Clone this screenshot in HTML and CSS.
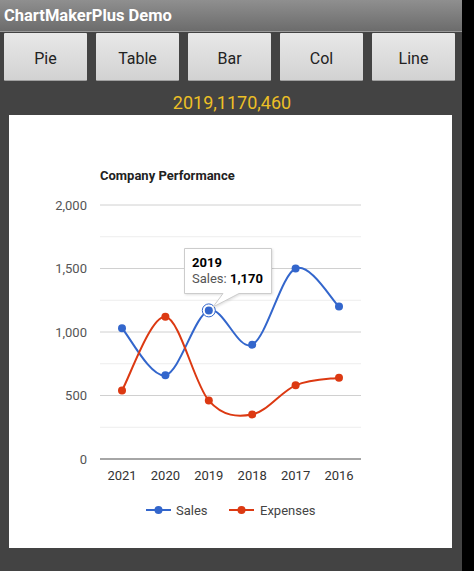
FILE: index.html
```html
<!DOCTYPE html>
<html>
<head>
<meta charset="utf-8">
<link rel="stylesheet" href="styles.css">
</head>
<body>
<div class="app">
  <div class="titlebar">ChartMakerPlus Demo</div>
  <div class="buttons">
    <div class="btn">Pie</div>
    <div class="btn">Table</div>
    <div class="btn">Bar</div>
    <div class="btn">Col</div>
    <div class="btn">Line</div>
  </div>
  <div class="value">2019,1170,460</div>
  <div class="panel">
    <svg class="chart" width="443" height="433" viewBox="0 0 443 433">
      <text class="ctitle" x="91" y="65">Company Performance</text>
      <g class="minor">
        <line x1="91" x2="352" y1="121.75" y2="121.75"/>
        <line x1="91" x2="352" y1="185.25" y2="185.25"/>
        <line x1="91" x2="352" y1="248.75" y2="248.75"/>
        <line x1="91" x2="352" y1="312.25" y2="312.25"/>
      </g>
      <g class="major">
        <line x1="91" x2="352" y1="90" y2="90"/>
        <line x1="91" x2="352" y1="153.5" y2="153.5"/>
        <line x1="91" x2="352" y1="217" y2="217"/>
        <line x1="91" x2="352" y1="280.5" y2="280.5"/>
      </g>
      <line class="base" x1="91" x2="352" y1="344" y2="344"/>
      <g class="ylab">
        <text x="78" y="94.5">2,000</text>
        <text x="78" y="158">1,500</text>
        <text x="78" y="221.5">1,000</text>
        <text x="78" y="285">500</text>
        <text x="78" y="348.5">0</text>
      </g>
      <g class="xlab">
        <text x="113" y="365">2021</text>
        <text x="156.4" y="365">2020</text>
        <text x="199.8" y="365">2019</text>
        <text x="243.2" y="365">2018</text>
        <text x="286.6" y="365">2017</text>
        <text x="330" y="365">2016</text>
      </g>
      <path class="sales" d="M113,213.2 C120.23,221.03 141.93,263.17 156.4,260.2 C170.87,257.23 185.33,200.48 199.8,195.4 C214.27,190.32 228.73,236.68 243.2,229.7 C257.67,222.72 272.13,159.85 286.6,153.5 C301.07,147.15 322.77,185.25 330,191.6"/>
      <path class="exp" d="M113,275.4 C120.23,263.13 141.93,200.1 156.4,201.8 C170.87,203.5 185.33,269.32 199.8,285.6 C214.27,301.88 228.73,302.05 243.2,299.5 C257.67,296.95 272.13,276.43 286.6,270.3 C301.07,264.17 322.77,263.97 330,262.7"/>
      <g class="sdot">
        <circle cx="113" cy="213.2" r="4"/>
        <circle cx="156.4" cy="260.2" r="4"/>
        <circle cx="243.2" cy="229.7" r="4"/>
        <circle cx="286.6" cy="153.5" r="4"/>
        <circle cx="330" cy="191.6" r="4"/>
      </g>
      <g class="edot">
        <circle cx="113" cy="275.4" r="4"/>
        <circle cx="156.4" cy="201.8" r="4"/>
        <circle cx="199.8" cy="285.6" r="4"/>
        <circle cx="243.2" cy="299.5" r="4"/>
        <circle cx="286.6" cy="270.3" r="4"/>
        <circle cx="330" cy="262.7" r="4"/>
      </g>
      <circle class="ring" cx="199.8" cy="195.4" r="6.5"/>
      <circle class="sdot-solid" cx="199.8" cy="195.4" r="4"/>
      <g class="tip">
        <path class="tipbox" d="M175.5,133.5 H262.5 V178.5 H230 L204,192 L214,178.5 H175.5 Z"/>
        <text class="tip1" x="183" y="151.5">2019</text>
        <text class="tip2" x="183" y="168"><tspan class="tlabel">Sales: </tspan><tspan class="tval">1,170</tspan></text>
      </g>
      <g class="legend">
        <line class="sales" x1="137" x2="162" y1="395" y2="395"/>
        <circle class="sdot-solid" cx="149.5" cy="395" r="4"/>
        <text x="167" y="399.5">Sales</text>
        <line class="exp" x1="220" x2="245" y1="395" y2="395"/>
        <circle class="edot-solid" cx="232.5" cy="395" r="4"/>
        <text x="251" y="399.5">Expenses</text>
      </g>
    </svg>
  </div>
</div>
</body>
</html>
```

FILE: styles.css
```css
html, body {
  margin: 0;
  padding: 0;
  background: #000;
}
body {
  width: 474px;
  height: 571px;
  overflow: hidden;
  font-family: Roboto, "Liberation Sans", sans-serif;
}
.app {
  width: 462px;
  height: 571px;
  background: #434343;
  display: flex;
  flex-direction: column;
}
.titlebar {
  height: 32px;
  box-sizing: border-box;
  padding-left: 4px;
  padding-top: 5px;
  line-height: 22px;
  font-size: 16.5px;
  font-weight: bold;
  color: #fff;
  background: linear-gradient(#8f8f8f, #6c6c6c);
  border-bottom: 1px solid #9a9a9a;
}
.buttons {
  display: flex;
  gap: 9px;
  padding: 1px 4px 0 4px;
  height: 49px;
  box-sizing: border-box;
}
.btn {
  width: 83px;
  height: 48px;
  box-sizing: border-box;
  padding-top: 3px;
  background: linear-gradient(#e8e8e8, #d2d2d2);
  border-bottom: 1px solid #a0a0a0;
  border-radius: 1px;
  display: flex;
  align-items: center;
  justify-content: center;
  font-size: 16px;
  color: #222;
}
.value {
  height: 34px;
  box-sizing: border-box;
  padding-top: 10px;
  padding-left: 2px;
  line-height: 24px;
  text-align: center;
  font-size: 18px;
  color: #ecbf26;
}
.panel {
  margin-left: 9px;
  width: 443px;
  height: 433px;
  background: #fff;
}
.chart {
  display: block;
  font-family: Roboto, "Liberation Sans", sans-serif;
}
.ctitle {
  font-size: 13px;
  font-weight: bold;
  fill: #222;
}
.minor line {
  stroke: #ededed;
  stroke-width: 1;
}
.major line {
  stroke: #d0d0d0;
  stroke-width: 1;
}
.base {
  stroke: #888;
  stroke-width: 1.5;
}
.ylab text {
  font-size: 13px;
  fill: #555;
  text-anchor: end;
}
.xlab text {
  font-size: 13px;
  fill: #333;
  text-anchor: middle;
}
.sales {
  fill: none;
  stroke: #3366cc;
  stroke-width: 2;
}
.exp {
  fill: none;
  stroke: #dc3912;
  stroke-width: 2;
}
.sdot circle, .sdot-solid {
  fill: #3366cc;
}
.edot circle, .edot-solid {
  fill: #dc3912;
}
.ring {
  fill: #fff;
  stroke: #3366cc;
  stroke-width: 1;
}
.tipbox {
  fill: #fff;
  stroke: #cccccc;
  stroke-width: 1;
  filter: drop-shadow(1px 1px 1px rgba(0,0,0,0.12));
}
.tip1 {
  font-size: 13px;
  font-weight: bold;
  fill: #000;
}
.tip2 {
  font-size: 13px;
}
.tlabel {
  fill: #555;
}
.tval {
  font-weight: bold;
  fill: #000;
}
.legend text {
  font-size: 13px;
  fill: #444;
}
```
